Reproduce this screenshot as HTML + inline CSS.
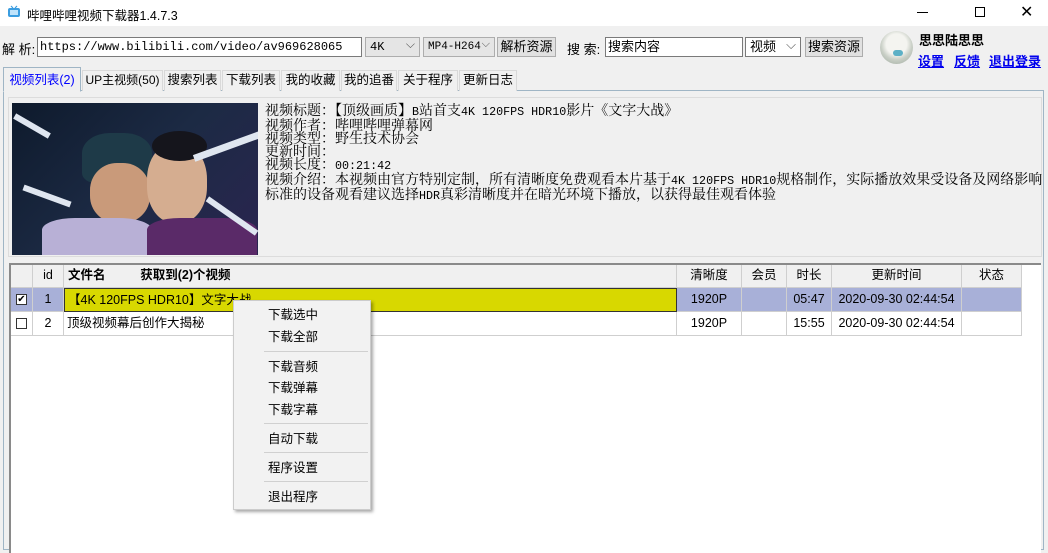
<!DOCTYPE html>
<html><head><meta charset="utf-8"><style>
*{box-sizing:border-box;margin:0;padding:0}
body{width:1048px;height:542px;overflow:hidden;background:#f0f0f0;font-family:"Liberation Sans","Noto Sans CJK SC",sans-serif;font-size:12px;color:#000;position:relative}
.a{position:absolute}
.title{top:0;left:0;width:1048px;height:26px;background:#fff}
.inp{background:#fff;border:1px solid #7a7a7a;height:20px;font-family:"Liberation Mono","Noto Sans CJK SC",monospace;font-size:12px;line-height:18px;padding-left:2px;white-space:nowrap;overflow:hidden}
.sel{background:#e5e5e5;border:1px solid #adadad;height:20px;line-height:18px;padding-left:4px;font-size:12px;white-space:nowrap}
.sel:after{content:"⌵";position:absolute;right:4px;top:-2px;color:#555}
.btn{background:#e1e1e1;border:1px solid #adadad;height:20px;line-height:18px;text-align:center;font-size:13px;white-space:nowrap}
.tab{top:70px;height:21px;border:1px solid #d9d9d9;border-bottom:none;background:#f0f0f0;font-size:12.5px;line-height:19px;text-align:center;white-space:nowrap;overflow:hidden}
.mono{font-family:"Noto Serif CJK SC","Liberation Serif",serif;font-size:14px;line-height:13px;white-space:nowrap}
.mono span{font-family:"Liberation Mono",monospace;font-size:11.7px}
.cell{position:absolute;border-right:1px solid #cfcfcf;border-bottom:1px solid #cfcfcf;height:24px;line-height:23px;text-align:center;font-size:12.5px;white-space:nowrap}
.mi{position:absolute;left:34px;font-size:12.5px}
.sep{position:absolute;left:30px;width:104px;height:1px;background:#d0d0d0}
</style></head><body>
<div class="a title">
 <svg class="a" style="left:7px;top:5px" width="14" height="14" viewBox="0 0 14 14"><rect x="1" y="3" width="12" height="9" rx="2" fill="#3b9de0"/><rect x="3" y="5" width="8" height="5" fill="#bfe3fb"/><path d="M4 1 L6 3 M10 1 L8 3" stroke="#3b9de0" stroke-width="1.2"/></svg>
 <div class="a" style="left:27px;top:5px;font-size:12.5px">哔哩哔哩视频下载器1.4.7.3</div>
 <div class="a" style="left:917px;top:12px;width:11px;height:1px;background:#000"></div>
 <div class="a" style="left:975px;top:7px;width:10px;height:10px;border:1px solid #000"></div>
 <div class="a" style="left:1020px;top:2px;font-size:16px">✕</div>
</div>
<div class="a" style="left:2px;top:39px;font-size:13px">解 析:</div>
<div class="a inp" style="left:37px;top:37px;width:325px">https://www.bilibili.com/video/av969628065</div>
<div class="a sel" style="left:365px;top:37px;width:55px;font-family:'Liberation Mono',monospace">4K</div>
<div class="a sel" style="left:423px;top:37px;width:72px;font-family:'Liberation Mono',monospace;font-size:11px">MP4-H264</div>
<div class="a btn" style="left:497px;top:37px;width:59px">解析资源</div>
<div class="a" style="left:567px;top:39px;font-size:13px">搜 索:</div>
<div class="a inp" style="left:605px;top:37px;width:138px;font-family:'Liberation Sans','Noto Sans CJK SC',sans-serif;font-size:13px">搜索内容</div>
<div class="a sel" style="left:745px;top:37px;width:56px;background:#fff;border-color:#7a7a7a;font-size:13px">视频</div>
<div class="a btn" style="left:805px;top:37px;width:58px">搜索资源</div>
<div class="a" style="left:880px;top:31px;width:33px;height:33px;border-radius:50%;background:radial-gradient(circle at 50% 40%,#f4f4f0 0 40%,#c9cfc6 60%,#9aa69b 100%)"></div>
<div class="a" style="left:893px;top:50px;width:10px;height:6px;background:#5cb0c6;border-radius:3px"></div>
<div class="a" style="left:919px;top:30px;font-weight:bold;font-size:13px">思思陆思思</div>
<div class="a" style="left:918px;top:51px;font-weight:bold;font-size:13px;color:#0000ee;text-decoration:underline">设置</div>
<div class="a" style="left:954px;top:51px;font-weight:bold;font-size:13px;color:#0000ee;text-decoration:underline">反馈</div>
<div class="a" style="left:989px;top:51px;font-weight:bold;font-size:13px;color:#0000ee;text-decoration:underline">退出登录</div>

<div class="a" style="left:3px;top:90px;width:1041px;height:460px;border:1px solid #9fb5c5;background:#f0f0f0"></div>
<div class="a tab" style="left:3px;top:67px;width:78px;height:25px;background:#f0f0f0;border-color:#9fb5c5;color:#0000ff;line-height:24px;z-index:2;border-bottom:1px solid #f0f0f0">视频列表(2)</div>
<div class="a tab" style="left:82px;width:81px;font-size:12px">UP主视频(50)</div>
<div class="a tab" style="left:164px;width:57px">搜索列表</div>
<div class="a tab" style="left:222px;width:58px">下载列表</div>
<div class="a tab" style="left:281px;width:59px">我的收藏</div>
<div class="a tab" style="left:341px;width:56px">我的追番</div>
<div class="a tab" style="left:398px;width:60px">关于程序</div>
<div class="a tab" style="left:459px;width:58px">更新日志</div>

<div class="a" style="left:8px;top:97px;width:1034px;height:160px;border:1px solid #dcdcdc"></div>
<div class="a" style="left:12px;top:103px;width:246px;height:152px;overflow:hidden;background:linear-gradient(135deg,#0e1a2c 0%,#1c2a44 50%,#2a2550 100%)">
 <div class="a" style="left:70px;top:30px;width:70px;height:50px;background:#1e3a48;border-radius:40% 40% 20% 20%"></div>
 <div class="a" style="left:78px;top:60px;width:60px;height:60px;background:#c99a7a;border-radius:45%"></div>
 <div class="a" style="left:135px;top:40px;width:60px;height:80px;background:#d5ad90;border-radius:45%"></div>
 <div class="a" style="left:140px;top:28px;width:55px;height:30px;background:#15151c;border-radius:50%"></div>
 <div class="a" style="left:30px;top:115px;width:110px;height:40px;background:#b8b0d6;border-radius:30% 30% 0 0"></div>
 <div class="a" style="left:135px;top:115px;width:110px;height:40px;background:#5a2a68;border-radius:30% 30% 0 0"></div>
 <div class="a" style="left:0px;top:20px;width:40px;height:6px;background:#dfe6f0;transform:rotate(30deg)"></div>
 <div class="a" style="left:180px;top:40px;width:70px;height:7px;background:#dfe6f0;transform:rotate(-20deg)"></div>
 <div class="a" style="left:190px;top:110px;width:60px;height:6px;background:#dfe6f0;transform:rotate(35deg)"></div>
 <div class="a" style="left:10px;top:90px;width:50px;height:6px;background:#dfe6f0;transform:rotate(20deg)"></div>
</div>
<div class="a mono" style="left:265px;top:104px">视频标题：【顶级画质】<span>B</span>站首支<span>4K 120FPS HDR10</span>影片《文字大战》<br>视频作者：哔哩哔哩弹幕网<br>视频类型：野生技术协会<br>更新时间：<br>视频长度：<span>00:21:42</span><br>视频介绍：本视频由官方特别定制，所有清晰度免费观看本片基于<span>4K 120FPS HDR10</span>规格制作，实际播放效果受设备及网络影响<br>标准的设备观看建议选择<span>HDR</span>真彩清晰度并在暗光环境下播放，以获得最佳观看体验</div>

<div class="a" style="left:9px;top:263px;width:1032px;height:290px;background:#fff;border-left:2px solid #8a8a8a;border-top:2px solid #8a8a8a"></div>
<div class="a" style="left:11px;top:265px;width:1011px;height:23px;background:#f0f0f0"></div>
<div class="cell" style="left:11px;top:265px;width:22px;height:23px"></div>
<div class="cell" style="left:33px;top:265px;width:31px;height:23px;line-height:21px">id</div>
<div class="cell" style="left:64px;top:265px;width:613px;height:23px;line-height:21px;text-align:left;padding-left:4px;font-weight:bold">文件名&nbsp;&nbsp;&nbsp;&nbsp;&nbsp;&nbsp;&nbsp;&nbsp;&nbsp;&nbsp;获取到(2)个视频</div>
<div class="cell" style="left:677px;top:265px;width:65px;height:23px;line-height:21px">清晰度</div>
<div class="cell" style="left:742px;top:265px;width:45px;height:23px;line-height:21px">会员</div>
<div class="cell" style="left:787px;top:265px;width:45px;height:23px;line-height:21px">时长</div>
<div class="cell" style="left:832px;top:265px;width:130px;height:23px;line-height:21px">更新时间</div>
<div class="cell" style="left:962px;top:265px;width:60px;height:23px;line-height:21px">状态</div>

<div class="a" style="left:11px;top:288px;width:1011px;height:23px;background:#a8b0d8"></div>
<div class="cell" style="left:11px;top:288px;width:22px"><div class="a" style="left:5px;top:6px;width:11px;height:11px;border:1px solid #333;background:#fff;font-size:10px;line-height:9px">✔</div></div>
<div class="cell" style="left:33px;top:288px;width:31px">1</div>
<div class="cell" style="left:64px;top:288px;width:613px;background:#d8d800;text-align:left;padding-left:3px;border:1px solid #333">【4K 120FPS HDR10】文字大战</div>
<div class="cell" style="left:677px;top:288px;width:65px">1920P</div>
<div class="cell" style="left:742px;top:288px;width:45px"></div>
<div class="cell" style="left:787px;top:288px;width:45px">05:47</div>
<div class="cell" style="left:832px;top:288px;width:130px">2020-09-30 02:44:54</div>
<div class="cell" style="left:962px;top:288px;width:60px"></div>

<div class="cell" style="left:11px;top:312px;width:22px"><div class="a" style="left:5px;top:6px;width:11px;height:11px;border:1px solid #333;background:#fff"></div></div>
<div class="cell" style="left:33px;top:312px;width:31px">2</div>
<div class="cell" style="left:64px;top:312px;width:613px;text-align:left;padding-left:3px">顶级视频幕后创作大揭秘</div>
<div class="cell" style="left:677px;top:312px;width:65px">1920P</div>
<div class="cell" style="left:742px;top:312px;width:45px"></div>
<div class="cell" style="left:787px;top:312px;width:45px">15:55</div>
<div class="cell" style="left:832px;top:312px;width:130px">2020-09-30 02:44:54</div>
<div class="cell" style="left:962px;top:312px;width:60px"></div>

<div class="a" style="left:233px;top:300px;width:138px;height:210px;background:#f2f2f2;border:1px solid #ccc;box-shadow:2px 2px 3px rgba(0,0,0,.35)">
 <div class="mi" style="top:3px">下载选中</div>
 <div class="mi" style="top:25px">下载全部</div>
 <div class="sep" style="top:50px;left:30px"></div>
 <div class="mi" style="top:55px">下载音频</div>
 <div class="mi" style="top:76px">下载弹幕</div>
 <div class="mi" style="top:98px">下载字幕</div>
 <div class="sep" style="top:122px"></div>
 <div class="mi" style="top:127px">自动下载</div>
 <div class="sep" style="top:151px"></div>
 <div class="mi" style="top:156px">程序设置</div>
 <div class="sep" style="top:180px"></div>
 <div class="mi" style="top:185px">退出程序</div>
</div>
</body></html>
